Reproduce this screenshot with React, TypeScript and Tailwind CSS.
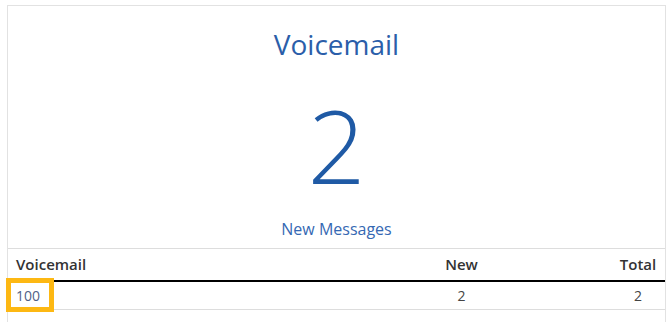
import React from "react";

export default function App() {
  return (
    <div className="w-[672px] h-[322px] bg-white overflow-hidden pt-[5px] pl-[7px] pr-[6px]" style={{ fontFamily: '"Open Sans", "Liberation Sans", sans-serif' }}>
      <div className="h-[317px] border border-b-0 border-[#e2e2e2] flex flex-col">
        <div className="flex flex-col items-center h-[242px]">
          <div className="mt-[20px] text-[28px] leading-[36px] text-[#2b5ea9]">Voicemail</div>
          <div className="mt-[32px] text-[102px] leading-[102px] font-light text-[#1f5aa5]">2</div>
          <div className="mt-[23px] text-[16px] leading-[20px] text-[#3568b3]">New Messages</div>
        </div>
        <div className="border-t border-[#dddddd]">
          <div className="relative">
            <div className="grid grid-cols-[421px_65px_119px_50px] items-end h-[33px] pb-[5px] border-b-2 border-black text-[15px] font-semibold text-[#333333]">
              <div className="pl-[8px]">Voicemail</div>
              <div className="text-center">New</div>
              <div></div>
              <div className="text-center">Total</div>
            </div>
            <div className="grid grid-cols-[421px_65px_119px_50px] items-center h-[28px] border-b border-[#dddddd] text-[14px] text-[#444444]">
              <div className="pl-[8px] text-[#4f5f86]">100</div>
              <div className="text-center">2</div>
              <div></div>
              <div className="text-center">2</div>
            </div>
            <div className="absolute left-[-2px] top-[29px] w-[48px] h-[34px] border-[5px] border-[#fdb813]"></div>
          </div>
        </div>
      </div>
    </div>
  );
}
